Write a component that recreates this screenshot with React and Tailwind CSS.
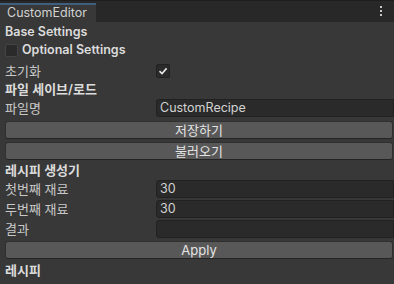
import React from "react";

const FONT = { fontFamily: "Inter, 'Noto Sans CJK KR', sans-serif" };

const Label = ({ children, bold, ko }) => (
  <div
    className={`pl-[5px] h-[18px] flex items-center leading-none ${
      ko ? "text-[13px]" : "text-[12.5px]"
    } ${bold ? "font-semibold text-[#dcdcdc]" : "text-[#c8c8c8]"}`}
  >
    {children}
  </div>
);

const Field = ({ label, value }) => (
  <div className="flex items-center h-[18px]">
    <div className="w-[156px] pl-[5px] text-[13px] leading-none text-[#c8c8c8]">
      {label}
    </div>
    <div className="flex-1 h-[18px] bg-[#2a2a2a] border border-[#212121] rounded-l-[3px] flex items-center pl-[3px] text-[12.5px] leading-none text-[#d2d2d2]">
      {value}
    </div>
  </div>
);

const Button = ({ children }) => (
  <div className="ml-[5px] mr-[1px] h-[18px] bg-[#585858] border border-[#303030] border-b-[#242424] rounded-[3px] flex items-center justify-center text-[13px] leading-none text-[#e4e4e4]">
    {children}
  </div>
);

export default function App() {
  return (
    <div className="w-[394px] h-[284px] bg-[#383838] overflow-hidden" style={FONT}>
      {/* tab bar */}
      <div className="h-[22px] bg-[#282828] border-t border-[#1e1e1e] flex items-end justify-between">
        <div className="w-[96px] h-[19px] bg-[#383838] border-t-2 border-[#3e5f80] flex items-center pl-[7px] text-[12.5px] leading-none text-[#d2d2d2]">
          CustomEditor
        </div>
        <div className="self-center mr-[12px] flex flex-col gap-[2px] pb-[1px]">
          <div className="w-[2px] h-[2px] bg-[#c8c8c8]" />
          <div className="w-[2px] h-[2px] bg-[#c8c8c8]" />
          <div className="w-[2px] h-[2px] bg-[#c8c8c8]" />
        </div>
      </div>

      <div className="pt-[1px] flex flex-col">
        <Label bold>Base Settings</Label>
        <div className="h-[18px] flex items-center pl-[5px]">
          <div className="w-[13px] h-[13px] bg-[#2a2a2a] border border-[#444] rounded-[2px]" />
          <span className="ml-[4px] text-[12.5px] leading-none font-semibold text-[#dcdcdc]">
            Optional Settings
          </span>
        </div>

        <div className="mt-[3px] h-[18px] flex items-center">
          <div className="w-[156px] pl-[5px] text-[13px] leading-none text-[#c8c8c8]">초기화</div>
          <div className="w-[14px] h-[14px] bg-[#2a2a2a] border border-[#212121] rounded-[2px] flex items-center justify-center">
            <svg width="10" height="10" viewBox="0 0 10 10">
              <path d="M1.5 5.2 L4 7.6 L8.6 2.4" fill="none" stroke="#e6e6e6" strokeWidth="1.6" />
            </svg>
          </div>
        </div>

        <Label bold ko>파일 세이브/로드</Label>
        <div className="mt-[1px]">
          <Field label="파일명" value="CustomRecipe" />
        </div>
        <div className="mt-[4px]">
          <Button>저장하기</Button>
        </div>
        <div className="mt-[3px]">
          <Button>불러오기</Button>
        </div>

        <div className="mt-[1px]">
          <Label bold ko>레시피 생성기</Label>
        </div>
        <div className="mt-[1px] flex flex-col gap-[2px]">
          <Field label="첫번째 재료" value="30" />
          <Field label="두번째 재료" value="30" />
          <Field label="결과" value="" />
        </div>
        <div className="mt-[3px]">
          <Button>Apply</Button>
        </div>
        <div className="mt-[2px]">
          <Label bold ko>레시피</Label>
        </div>
      </div>
    </div>
  );
}
